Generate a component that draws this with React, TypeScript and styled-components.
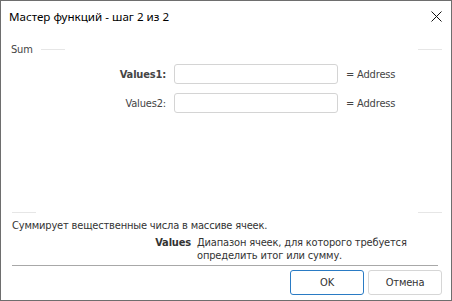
import React from "react";
import styled, { createGlobalStyle } from "styled-components";

const Global = createGlobalStyle`
  html, body { margin: 0; padding: 0; background: #ffffff; }
  * { box-sizing: border-box; }
`;

const Window = styled.div`
  width: 452px;
  height: 301px;
  border: 1px solid #6e6e6e;
  background: #ffffff;
  display: flex;
  flex-direction: column;
  font-family: "DejaVu Sans Condensed", "DejaVu Sans", sans-serif;
  font-size: 11px;
  letter-spacing: -0.17px;
  color: #333333;
`;

const TitleBar = styled.div`
  height: 31px;
  flex: none;
  display: flex;
  align-items: center;
  justify-content: space-between;
  padding: 0 9px 1px 8px;
`;

const Title = styled.div`
  font-family: "Noto Sans", "Open Sans", sans-serif;
  font-size: 11.6px;
  letter-spacing: 0;
  color: #000000;
`;

const CloseButton = styled.div`
  width: 12px;
  height: 12px;
  display: flex;
  align-items: center;
  justify-content: center;
`;

const Body = styled.div`
  flex: 1;
  display: flex;
  flex-direction: column;
  padding: 0 9px 5px 10px;
`;

const GroupHeader = styled.div`
  margin-top: 10px;
  height: 14px;
  display: flex;
  align-items: center;
  color: #444444;
`;

const GroupLine = styled.div<{ $gap?: number }>`
  width: 24px;
  height: 1px;
  background: #e6e6e6;
  margin-left: ${(p) => p.$gap ?? 0}px;
`;

const Spacer = styled.div`
  flex: 1;
`;

const FieldGrid = styled.div`
  margin-top: 8px;
  display: grid;
  grid-template-columns: 155px 164px auto;
  column-gap: 8px;
  row-gap: 9px;
  align-items: center;
`;

const FieldLabel = styled.div<{ $bold?: boolean }>`
  text-align: right;
  font-weight: ${(p) => (p.$bold ? 700 : 400)};
  color: #444444;
`;

const Input = styled.div`
  height: 20px;
  border: 1px solid #d4d4d4;
  border-radius: 3px;
  background: #ffffff;
`;

const Hint = styled.div`
  color: #444444;
`;

const LowerLines = styled.div`
  display: flex;
  align-items: center;
  height: 1px;
  padding-left: 1px;
`;

const Description = styled.div`
  margin-top: 6px;
  line-height: 14px;
  padding-left: 1px;
  color: #333333;
`;

const ParamRow = styled.div`
  margin-top: 3px;
  display: grid;
  grid-template-columns: 180px 1fr;
  column-gap: 6px;
  line-height: 13px;
`;

const ParamName = styled.div`
  text-align: right;
  font-weight: 700;
  color: #333333;
`;

const ParamText = styled.div`
  color: #333333;
  padding-right: 20px;
`;

const Separator = styled.div`
  margin-top: 3px;
  height: 1px;
  background: #a8a8a8;
  margin-left: 1px;
  margin-right: 4px;
`;

const ButtonRow = styled.div`
  margin-top: 4px;
  display: flex;
  justify-content: flex-end;
  gap: 4px;
`;

const Button = styled.div<{ $primary?: boolean }>`
  width: 74px;
  height: 25px;
  border: 1px solid ${(p) => (p.$primary ? "#2a7bc4" : "#d6d6d6")};
  border-radius: 3px;
  background: #ffffff;
  display: flex;
  align-items: center;
  justify-content: center;
  color: #333333;
`;

export default function App() {
  return (
    <>
      <Global />
      <Window>
        <TitleBar>
          <Title>Мастер функций - шаг 2 из 2</Title>
          <CloseButton>
            <svg width="11" height="11" viewBox="0 0 11 11">
              <path d="M0.5 0.5 L10.5 10.5 M10.5 0.5 L0.5 10.5" stroke="#111" strokeWidth="1" fill="none" />
            </svg>
          </CloseButton>
        </TitleBar>
        <Body>
          <GroupHeader>
            <span>Sum</span>
            <GroupLine $gap={8} />
            <Spacer />
            <GroupLine />
          </GroupHeader>
          <FieldGrid>
            <FieldLabel $bold>Values1:</FieldLabel>
            <Input />
            <Hint>= Address</Hint>
            <FieldLabel>Values2:</FieldLabel>
            <Input />
            <Hint>= Address</Hint>
          </FieldGrid>
          <Spacer />
          <LowerLines>
            <GroupLine />
            <Spacer />
            <GroupLine />
          </LowerLines>
          <Description>Суммирует вещественные числа в массиве ячеек.</Description>
          <ParamRow>
            <ParamName>Values</ParamName>
            <ParamText>Диапазон ячеек, для которого требуется определить итог или сумму.</ParamText>
          </ParamRow>
          <Separator />
          <ButtonRow>
            <Button $primary>OK</Button>
            <Button>Отмена</Button>
          </ButtonRow>
        </Body>
      </Window>
    </>
  );
}
